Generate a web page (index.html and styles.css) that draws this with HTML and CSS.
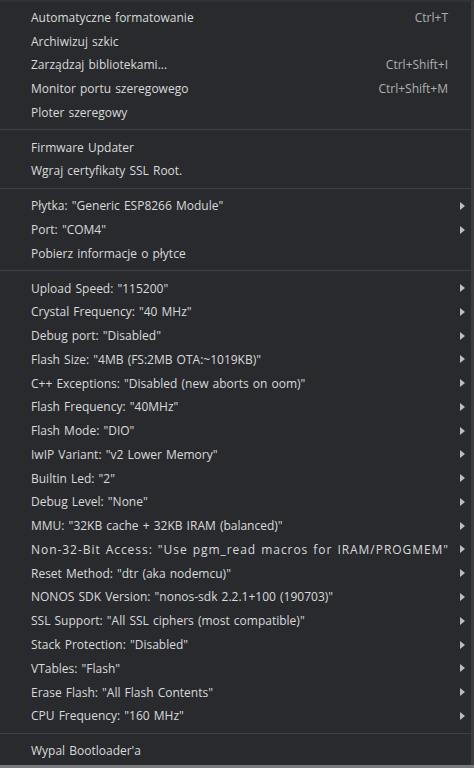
FILE: index.html
```html
<!DOCTYPE html>
<html>
<head>
<meta charset="utf-8">
<link rel="stylesheet" href="styles.css">
</head>
<body>
<div class="menu">
  <div class="item"><span class="label">Automatyczne formatowanie</span><span class="key">Ctrl+T</span></div>
  <div class="item"><span class="label">Archiwizuj szkic</span></div>
  <div class="item"><span class="label">Zarządzaj bibliotekami...</span><span class="key">Ctrl+Shift+I</span></div>
  <div class="item"><span class="label">Monitor portu szeregowego</span><span class="key">Ctrl+Shift+M</span></div>
  <div class="item"><span class="label">Ploter szeregowy</span></div>
  <div class="sep"></div>
  <div class="item"><span class="label">Firmware Updater</span></div>
  <div class="item"><span class="label">Wgraj certyfikaty SSL Root.</span></div>
  <div class="sep"></div>
  <div class="item sub"><span class="label">Płytka: "Generic ESP8266 Module"</span></div>
  <div class="item sub"><span class="label">Port: "COM4"</span></div>
  <div class="item"><span class="label">Pobierz informacje o płytce</span></div>
  <div class="sep"></div>
  <div class="item sub"><span class="label">Upload Speed: "115200"</span></div>
  <div class="item sub"><span class="label">Crystal Frequency: "40 MHz"</span></div>
  <div class="item sub"><span class="label">Debug port: "Disabled"</span></div>
  <div class="item sub"><span class="label">Flash Size: "4MB (FS:2MB OTA:~1019KB)"</span></div>
  <div class="item sub"><span class="label">C++ Exceptions: "Disabled (new aborts on oom)"</span></div>
  <div class="item sub"><span class="label">Flash Frequency: "40MHz"</span></div>
  <div class="item sub"><span class="label">Flash Mode: "DIO"</span></div>
  <div class="item sub"><span class="label">IwIP Variant: "v2 Lower Memory"</span></div>
  <div class="item sub"><span class="label">Builtin Led: "2"</span></div>
  <div class="item sub"><span class="label">Debug Level: "None"</span></div>
  <div class="item sub"><span class="label">MMU: "32KB cache + 32KB IRAM (balanced)"</span></div>
  <div class="item sub"><span class="label label-wide">Non-32-Bit Access: "Use pgm_read macros for IRAM/PROGMEM"</span></div>
  <div class="item sub"><span class="label">Reset Method: "dtr (aka nodemcu)"</span></div>
  <div class="item sub"><span class="label">NONOS SDK Version: "nonos-sdk 2.2.1+100 (190703)"</span></div>
  <div class="item sub"><span class="label">SSL Support: "All SSL ciphers (most compatible)"</span></div>
  <div class="item sub"><span class="label">Stack Protection: "Disabled"</span></div>
  <div class="item sub"><span class="label">VTables: "Flash"</span></div>
  <div class="item sub"><span class="label">Erase Flash: "All Flash Contents"</span></div>
  <div class="item sub"><span class="label">CPU Frequency: "160 MHz"</span></div>
  <div class="sep"></div>
  <div class="item"><span class="label">Wypal Bootloader'a</span></div>
</div>
</body>
</html>
```
FILE: styles.css
```css
html, body {
  margin: 0;
  padding: 0;
  background: #76787b;
}
body {
  width: 474px;
  height: 768px;
  overflow: hidden;
}
.menu {
  box-sizing: border-box;
  width: 474px;
  height: 765px;
  background: #282a2e;
  border-top: 2px solid #303236;
  border-right: 3px solid #3a3c40;
  padding: 3.5px 0 0 0;
  font-family: "Open Sans", sans-serif;
  font-size: 12px;
  word-spacing: 1px;
  color: #dadada;
  display: flex;
  flex-direction: column;
}
.item {
  height: 23.78px;
  display: flex;
  align-items: center;
  padding: 0 23px 0 31px;
  position: relative;
  flex: none;
}
.label {
  flex: 1;
  white-space: nowrap;
}
.label-wide {
  letter-spacing: 0.95px;
}
.key {
  color: #b0b0b0;
  word-spacing: 0;
  white-space: nowrap;
}
.sub::after {
  content: "";
  position: absolute;
  right: 6px;
  top: 50%;
  margin-top: -4px;
  border-left: 5px solid #bdbdbd;
  border-top: 4px solid transparent;
  border-bottom: 4px solid transparent;
}
.sep {
  flex: none;
  height: 1px;
  background: #3f4145;
  margin: 5px 0 5px 0;
}
```
